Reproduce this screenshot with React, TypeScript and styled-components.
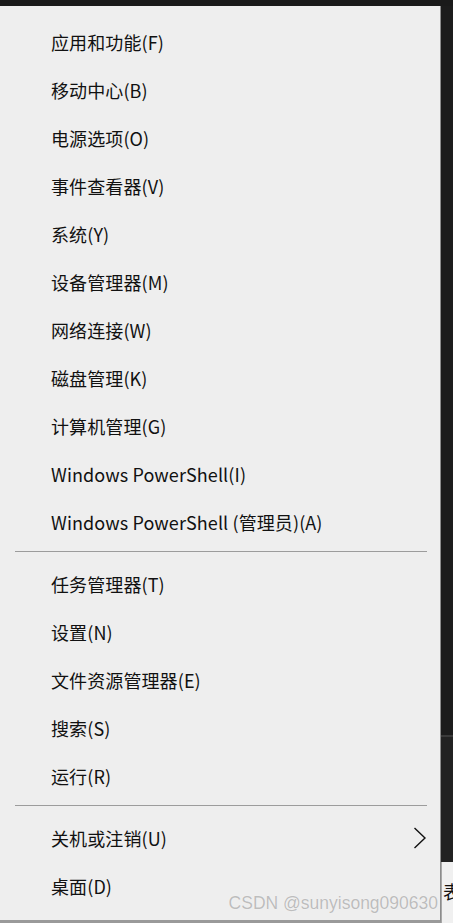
import React from 'react';
import styled, { createGlobalStyle } from 'styled-components';

const GlobalStyle = createGlobalStyle`
  html, body {
    margin: 0;
    padding: 0;
    background: #1b1b1b;
  }
  #root {
    width: 453px;
    height: 923px;
    overflow: hidden;
  }
`;

const Screen = styled.div`
  width: 453px;
  height: 923px;
  display: flex;
  flex-direction: column;
  background: #1b1b1b;
  position: relative;
  overflow: hidden;
`;

const TopStrip = styled.div`
  height: 6px;
  flex-shrink: 0;
  background: #1a1a1a;
`;

const Body = styled.div`
  flex: 1;
  display: flex;
  min-height: 0;
`;

const Menu = styled.div`
  width: 441px;
  flex-shrink: 0;
  background: #eeeeee;
  border-right: 1px solid #8c8c8c;
  border-bottom: 3px solid #9a9a9a;
  padding-top: 12px;
  box-sizing: border-box;
  display: flex;
  flex-direction: column;
  font-family: "Noto Sans CJK SC", "Noto Sans", sans-serif;
  color: #111;
`;

const Item = styled.div`
  height: 48px;
  flex-shrink: 0;
  display: flex;
  align-items: center;
  justify-content: space-between;
  padding: 0 13px 0 51px;
  font-size: 18px;
  letter-spacing: 0.1px;
`;

const Separator = styled.div`
  height: 1px;
  margin: 5px 13px 8px 15px;
  background: #9c9c9c;
  flex-shrink: 0;
`;

const Side = styled.div`
  flex: 1;
  display: flex;
  flex-direction: column;
  overflow: hidden;
`;

const SideDark = styled.div<{ $h: number; $tone: string }>`
  height: ${(p) => p.$h}px;
  flex-shrink: 0;
  background: ${(p) => p.$tone};
`;

const SideLight = styled.div`
  flex: 1;
  background: #f0f0f0;
  padding: 16px 0 0 1px;
  font-family: "Noto Sans CJK SC", sans-serif;
  font-size: 18px;
  color: #111;
  white-space: nowrap;
  border-left: 1px solid #a8a8a8;
`;

const Watermark = styled.div`
  position: absolute;
  right: 15px;
  bottom: 9px;
  font-family: "Liberation Sans", Arial, sans-serif;
  font-size: 17.5px;
  color: #bdbdbd;
  text-shadow: 0 0 1px #fff;
`;

const Chevron = () => (
  <svg width="14" height="22" viewBox="0 0 14 22" fill="none">
    <path d="M1.5 1 L12 11 L1.5 21" stroke="#111" strokeWidth="1.4" />
  </svg>
);

const groups: { label: string; more?: boolean }[][] = [
  [
    { label: '应用和功能(F)' },
    { label: '移动中心(B)' },
    { label: '电源选项(O)' },
    { label: '事件查看器(V)' },
    { label: '系统(Y)' },
    { label: '设备管理器(M)' },
    { label: '网络连接(W)' },
    { label: '磁盘管理(K)' },
    { label: '计算机管理(G)' },
    { label: 'Windows PowerShell(I)' },
    { label: 'Windows PowerShell (管理员)(A)' },
  ],
  [
    { label: '任务管理器(T)' },
    { label: '设置(N)' },
    { label: '文件资源管理器(E)' },
    { label: '搜索(S)' },
    { label: '运行(R)' },
  ],
  [{ label: '关机或注销(U)', more: true }, { label: '桌面(D)' }],
];

export default function App() {
  return (
    <>
      <GlobalStyle />
      <Screen>
        <TopStrip />
        <Body>
          <Menu>
            {groups.map((g, gi) => (
              <React.Fragment key={gi}>
                {gi > 0 && <Separator />}
                {g.map((it) => (
                  <Item key={it.label}>
                    <span>{it.label}</span>
                    {it.more && <Chevron />}
                  </Item>
                ))}
              </React.Fragment>
            ))}
          </Menu>
          <Side>
            <SideDark $h={729} $tone="#1c1c1c" />
            <SideDark $h={2} $tone="#3a3a3a" />
            <SideDark $h={125} $tone="#222222" />
            <SideLight>表</SideLight>
          </Side>
        </Body>
        <Watermark>CSDN @sunyisong090630</Watermark>
      </Screen>
    </>
  );
}
